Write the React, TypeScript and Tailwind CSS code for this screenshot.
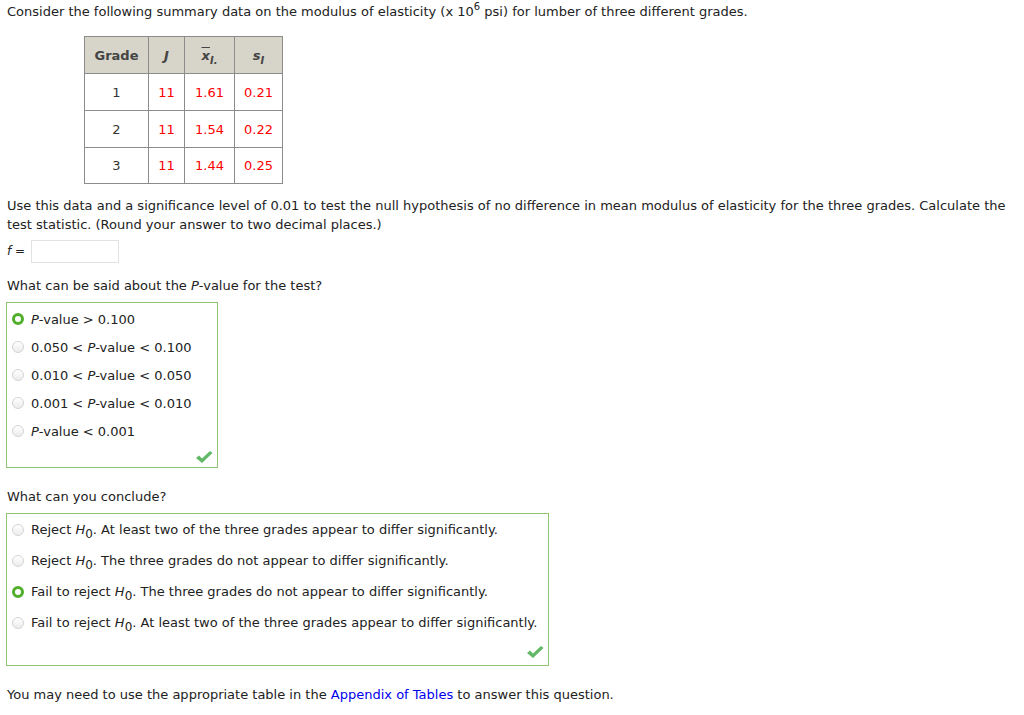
import React from "react";

const font = { fontFamily: '"DejaVu Sans", Verdana, sans-serif' };

const Radio = ({ on }: { on?: boolean }) =>
  on ? (
    <span className="inline-block w-[12px] h-[12px] rounded-full border-[3px] border-[#4fae2a] bg-white shrink-0" />
  ) : (
    <span className="inline-block w-[12px] h-[12px] rounded-full border border-[#d4d4d4] bg-gradient-to-b from-white to-[#ececec] shrink-0" />
  );

const Check = () => (
  <svg width="18" height="14" viewBox="0 0 18 14">
    <path d="M1 8 L4 5.5 L7 8.5 L15 1 L17.5 3 L7 13 Z" fill="#62b866" />
  </svg>
);

const H0 = () => (
  <span>
    <i>H</i>
    <sub className="text-[12px] top-[4px] bottom-auto">0</sub>
  </span>
);

const P = () => <i>P</i>;

const pOptions: React.ReactNode[] = [
  <><P />-value &gt; 0.100</>,
  <>0.050 &lt; <P />-value &lt; 0.100</>,
  <>0.010 &lt; <P />-value &lt; 0.050</>,
  <>0.001 &lt; <P />-value &lt; 0.010</>,
  <><P />-value &lt; 0.001</>,
];

const conclusions: React.ReactNode[] = [
  <>Reject <H0 />. At least two of the three grades appear to differ significantly.</>,
  <>Reject <H0 />. The three grades do not appear to differ significantly.</>,
  <>Fail to reject <H0 />. The three grades do not appear to differ significantly.</>,
  <>Fail to reject <H0 />. At least two of the three grades appear to differ significantly.</>,
];

const rows = [
  ["1", "11", "1.61", "0.21"],
  ["2", "11", "1.54", "0.22"],
  ["3", "11", "1.44", "0.25"],
];

export default function App() {
  return (
    <div className="min-h-screen bg-white text-[13px] text-[#222] px-[7px] leading-[19px]" style={font}>
      <div className="pt-[2px]">
        Consider the following summary data on the modulus of elasticity (x 10
        <sup className="text-[10px] top-[-6px]">6</sup> psi) for lumber of three different grades.
      </div>

      <table className="mt-[15px] ml-[77px] border-collapse border border-[#8c8c8c]">
        <thead>
          <tr className="bg-[#d7d4ca] h-[37px] text-[#444] font-bold">
            <th className="w-[64px] border border-[#8c8c8c] font-bold">Grade</th>
            <th className="w-[36px] border border-[#8c8c8c] font-bold italic">J</th>
            <th className="w-[50px] border border-[#8c8c8c] font-bold">
              <span className="italic overline">x</span>
              <sub className="italic text-[10px] top-[4px] bottom-auto">I.</sub>
            </th>
            <th className="w-[48px] border border-[#8c8c8c] font-bold">
              <span className="italic">s</span>
              <sub className="italic text-[10px] top-[4px] bottom-auto">I</sub>
            </th>
          </tr>
        </thead>
        <tbody>
          {rows.map((r, i) => (
            <tr key={i} className={i === 2 ? "h-[36px]" : "h-[37px]"}>
              <td className="border border-[#8c8c8c] text-center text-[#333]">{r[0]}</td>
              <td className="border border-[#8c8c8c] text-center text-[#f00]">{r[1]}</td>
              <td className="border border-[#8c8c8c] text-center text-[#f00]">{r[2]}</td>
              <td className="border border-[#8c8c8c] text-center text-[#f00]">{r[3]}</td>
            </tr>
          ))}
        </tbody>
      </table>

      <p className="mt-[12px]">
        Use this data and a significance level of 0.01 to test the null hypothesis of no difference in mean modulus of
        elasticity for the three grades. Calculate the test statistic. (Round your answer to two decimal places.)
      </p>

      <div className="flex items-center mt-[6px] h-[23px]">
        <span className="text-[12px] w-[24px]">
          <i>f</i> =
        </span>
        <input className="w-[88px] h-[23px] border border-[#e2e2e2] outline-none" />
      </div>

      <p className="mt-[13px]">
        What can be said about the <P />-value for the test?
      </p>

      <div className="mt-[7px] -ml-[1px] w-[212px] h-[166px] border border-[#8fc66f] pt-[2px] flex flex-col">
        {pOptions.map((o, i) => (
          <div key={i} className="flex items-center h-[28px] pl-[5px] gap-[7px]">
            <Radio on={i === 0} />
            <span>{o}</span>
          </div>
        ))}
        <div className="flex justify-end pr-[4px] mt-[5px]">
          <Check />
        </div>
      </div>

      <p className="mt-[19px]">What can you conclude?</p>

      <div className="mt-[7px] -ml-[1px] w-[543px] h-[153px] border border-[#8fc66f] flex flex-col">
        {conclusions.map((o, i) => (
          <div key={i} className="flex items-center h-[31px] pl-[5px] gap-[7px]">
            <Radio on={i === 2} />
            <span>{o}</span>
          </div>
        ))}
        <div className="flex justify-end pr-[4px] mt-[7px]">
          <Check />
        </div>
      </div>

      <p className="mt-[19px]">
        You may need to use the appropriate table in the <span className="text-[#0000ee]">Appendix of Tables</span> to
        answer this question.
      </p>
    </div>
  );
}
